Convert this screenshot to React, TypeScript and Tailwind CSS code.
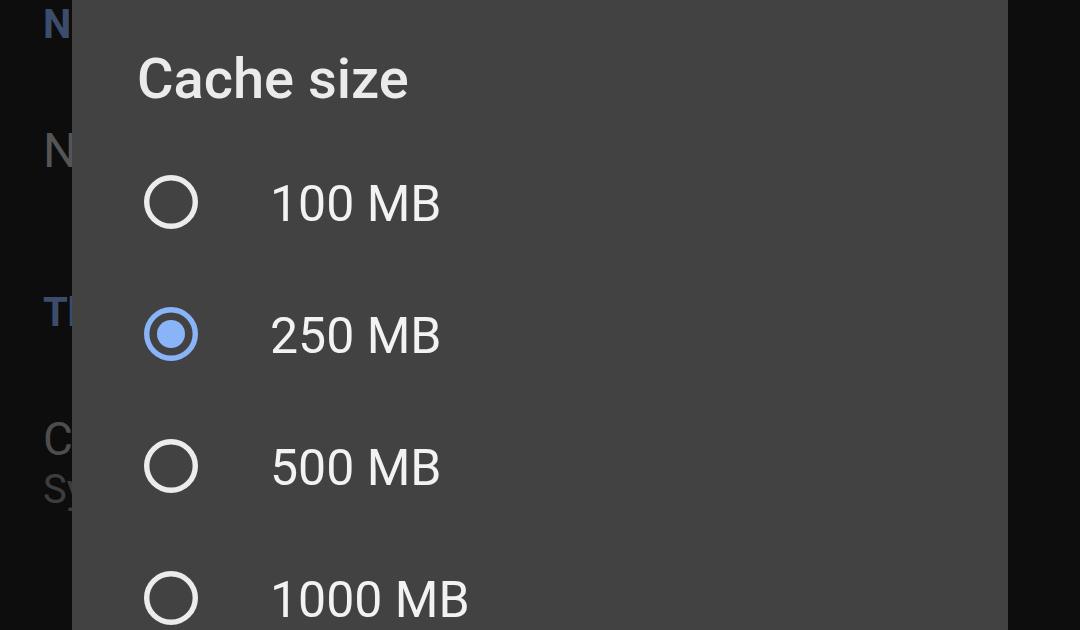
import React from "react";

const options = ["100 MB", "250 MB", "500 MB", "1000 MB"];
const selected = 1;

function Radio({ checked }: { checked: boolean }) {
  const color = checked ? "#8ab4f8" : "#ececec";
  return (
    <svg width="54" height="54" viewBox="0 0 54 54" className="shrink-0">
      <circle cx="27" cy="27" r="24.3" fill="none" stroke={color} strokeWidth="5.4" />
      {checked && <circle cx="27" cy="27" r="14" fill={color} />}
    </svg>
  );
}

export default function App() {
  return (
    <div
      className="relative w-[1080px] h-[630px] overflow-hidden bg-[#0d0d0d]"
      style={{ fontFamily: "Roboto, 'Noto Sans', sans-serif" }}
    >
      {/* background settings page behind scrim */}
      <div className="flex flex-col pl-[43px] pt-[3px]">
        <div className="h-[44px] text-[40px] leading-[44px] font-bold text-[#3c4d6b]">Network</div>
        <div className="mt-[80px] h-[48px] text-[48px] leading-[48px] text-[#555555]">Notifications</div>
        <div className="mt-[116px] h-[44px] text-[40px] leading-[44px] font-bold text-[#3c4d6b]">Theme</div>
        <div className="mt-[78px] text-[46px] leading-[52px] text-[#4d4d4d]">Color</div>
        <div className="text-[40px] leading-[50px] text-[#3d3d3d]">System</div>
      </div>

      {/* dialog */}
      <div className="absolute left-[72px] top-0 w-[936px] h-[630px] bg-[#424242] flex flex-col">
        <div className="pl-[65px] pt-[51px] h-[56px] box-content text-[56px] leading-[56px] font-medium text-[#ebebeb]">
          Cache size
        </div>
        <div className="flex flex-col mt-[28.5px]">
          {options.map((o, i) => (
            <div key={o} className="flex items-center h-[132px] pl-[72px]">
              <Radio checked={i === selected} />
              <span className="ml-[72px] text-[50px] leading-[50px] text-[#f2f2f2] translate-y-[2px]">
                {o}
              </span>
            </div>
          ))}
        </div>
      </div>
    </div>
  );
}
